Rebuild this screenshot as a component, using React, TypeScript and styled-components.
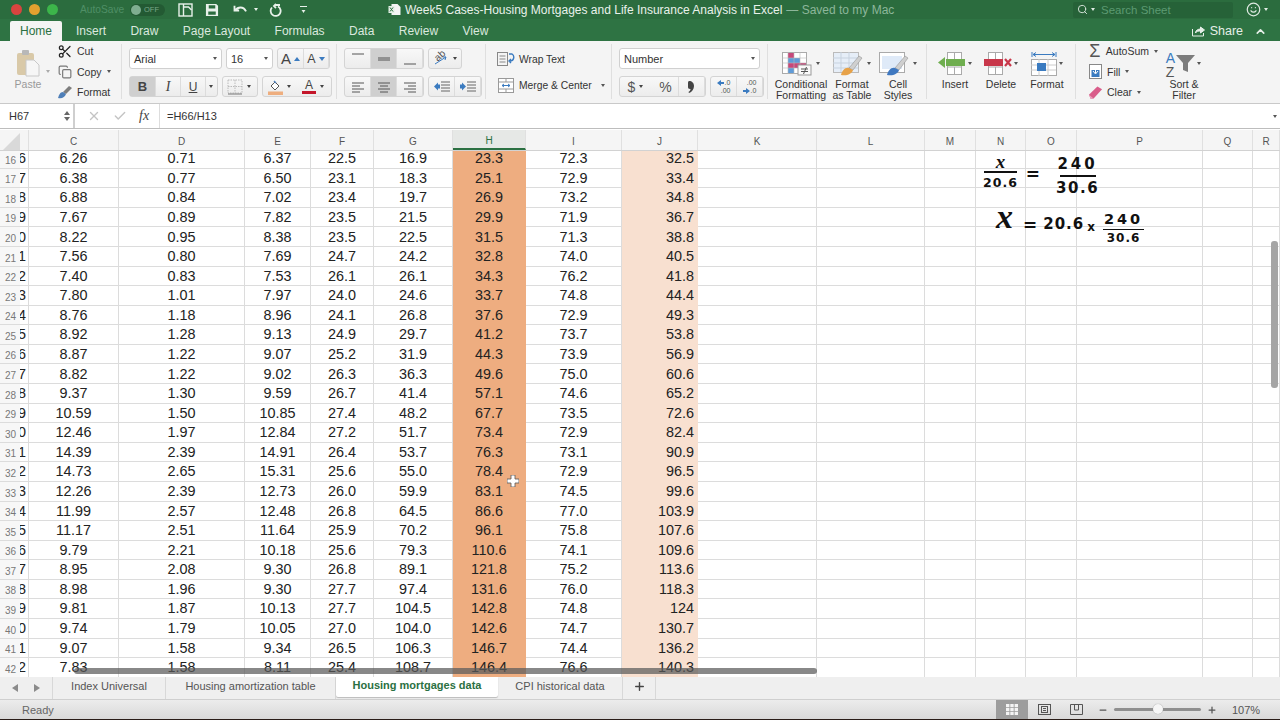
import React from 'react';
import styled, { createGlobalStyle } from 'styled-components';
import { Check, ChevronUp, Copy, Minus, Plus, Scissors, Search, Smile, X } from 'lucide-react';

const UI_FONT = '"Liberation Sans", Arial, sans-serif';

const GlobalStyle = createGlobalStyle`
  html, body {
    margin: 0;
    width: 1280px;
    height: 720px;
    overflow: hidden;
    background: #fff;
    font-family: ${UI_FONT};
  }
`;

const COLUMNS = '20px 9px 90px 126px 66px 63px 79px 73px 96px 76px 119px 108px 51px 50px 51px 126px 50px 27px';

const HEADERS = ['C', 'D', 'E', 'F', 'G', 'H', 'I', 'J', 'K', 'L', 'M', 'N', 'O', 'P', 'Q', 'R'];

const ROWS: string[][] = [
  ['6.26', '0.71', '6.37', '22.5', '16.9', '23.3', '72.3', '32.5'],
  ['6.38', '0.77', '6.50', '23.1', '18.3', '25.1', '72.9', '33.4'],
  ['6.88', '0.84', '7.02', '23.4', '19.7', '26.9', '73.2', '34.8'],
  ['7.67', '0.89', '7.82', '23.5', '21.5', '29.9', '71.9', '36.7'],
  ['8.22', '0.95', '8.38', '23.5', '22.5', '31.5', '71.3', '38.8'],
  ['7.56', '0.80', '7.69', '24.7', '24.2', '32.8', '74.0', '40.5'],
  ['7.40', '0.83', '7.53', '26.1', '26.1', '34.3', '76.2', '41.8'],
  ['7.80', '1.01', '7.97', '24.0', '24.6', '33.7', '74.8', '44.4'],
  ['8.76', '1.18', '8.96', '24.1', '26.8', '37.6', '72.9', '49.3'],
  ['8.92', '1.28', '9.13', '24.9', '29.7', '41.2', '73.7', '53.8'],
  ['8.87', '1.22', '9.07', '25.2', '31.9', '44.3', '73.9', '56.9'],
  ['8.82', '1.22', '9.02', '26.3', '36.3', '49.6', '75.0', '60.6'],
  ['9.37', '1.30', '9.59', '26.7', '41.4', '57.1', '74.6', '65.2'],
  ['10.59', '1.50', '10.85', '27.4', '48.2', '67.7', '73.5', '72.6'],
  ['12.46', '1.97', '12.84', '27.2', '51.7', '73.4', '72.9', '82.4'],
  ['14.39', '2.39', '14.91', '26.4', '53.7', '76.3', '73.1', '90.9'],
  ['14.73', '2.65', '15.31', '25.6', '55.0', '78.4', '72.9', '96.5'],
  ['12.26', '2.39', '12.73', '26.0', '59.9', '83.1', '74.5', '99.6'],
  ['11.99', '2.57', '12.48', '26.8', '64.5', '86.6', '77.0', '103.9'],
  ['11.17', '2.51', '11.64', '25.9', '70.2', '96.1', '75.8', '107.6'],
  ['9.79', '2.21', '10.18', '25.6', '79.3', '110.6', '74.1', '109.6'],
  ['8.95', '2.08', '9.30', '26.8', '89.1', '121.8', '75.2', '113.6'],
  ['8.98', '1.96', '9.30', '27.7', '97.4', '131.6', '76.0', '118.3'],
  ['9.81', '1.87', '10.13', '27.7', '104.5', '142.8', '74.8', '124'],
  ['9.74', '1.79', '10.05', '27.0', '104.0', '142.6', '74.7', '130.7'],
  ['9.07', '1.58', '9.34', '26.5', '106.3', '146.7', '74.4', '136.2'],
  ['7.83', '1.58', '8.11', '25.4', '108.7', '146.4', '76.6', '140.3'],
];

const TABS = ['Insert', 'Draw', 'Page Layout', 'Formulas', 'Data', 'Review', 'View'];

const App: React.FC = () => (
  <Page>
    <GlobalStyle />
    <TitleBar>
      <Lights>
        <Light $color="#d8443f" />
        <Light $color="#e3a12f" />
        <Light $color="#3cb54a" />
      </Lights>
      <AutoSave>AutoSave</AutoSave>
      <Toggle>
        <Knob />
        OFF
      </Toggle>
      <QuickIcons>
        <QuickIcon $left={0}>
          <svg width="15" height="14" viewBox="0 0 15 14" fill="none" stroke="#e8f1ea" strokeWidth="1.4">
            <rect x="1" y="1" width="13" height="12" />
            <path d="M5.5 1v12M5.5 4h5l3 3" />
          </svg>
        </QuickIcon>
        <QuickIcon $left={12}>
          <svg width="14" height="14" viewBox="0 0 15 15" fill="#e8f1ea">
            <path d="M1 1h11l2 2v11H1zM4 2.5V6h7V2.5zM3.5 9v3.5h8V9z" fillRule="evenodd" />
          </svg>
        </QuickIcon>
        <QuickIcon $left={14}>
          <svg width="15" height="12" viewBox="0 0 16 13" fill="none" stroke="#e8f1ea" strokeWidth="2">
            <path d="M1.5 2v5h5M2 7c3-4 9-5 12 1" />
          </svg>
        </QuickIcon>
        <QuickIcon $left={5}><SmallCaret $color="#e8f1ea" /></QuickIcon>
        <QuickIcon $left={10}>
          <svg width="13" height="14" viewBox="0 0 13 14" fill="none" stroke="#e8f1ea" strokeWidth="1.8">
            <path d="M6 2h5M7 1 5 3l2 2M9 3.5a5 5 0 1 1-6 1" />
          </svg>
        </QuickIcon>
        <QuickIcon $left={18}><CustomizeMark /></QuickIcon>
      </QuickIcons>
      <DocTitle>
        <svg width="13" height="13" viewBox="0 0 12 13">
          <path d="M3 1h6l3 3v8H3z" fill="#f4f4f4" />
          <rect x="0" y="3" width="6" height="7" fill="#e4efe6" />
          <path d="M1.5 4.5l3 4M4.5 4.5l-3 4" stroke="#2b6e40" strokeWidth="1" />
        </svg>
        <TitleText>Week5 Cases-Housing Mortgages and Life Insurance Analysis in Excel</TitleText>
        <SavedText>— Saved to my Mac</SavedText>
      </DocTitle>
      <SearchBox>
        <Search size={11} color="#dfeae2" />
        <SmallCaret $color="#dfeae2" />
        <SearchLabel>Search Sheet</SearchLabel>
      </SearchBox>
      <Smiley>
        <Smile size={15} color="#dfeae2" />
        <SmallCaret $color="#dfeae2" />
      </Smiley>
    </TitleBar>

    <TabBar>
      <HomeTab>Home</HomeTab>
      <TabList>
        {TABS.map((tab) => (
          <RibbonTab key={tab}>{tab}</RibbonTab>
        ))}
      </TabList>
      <ShareBox>
        <svg width="15" height="12" viewBox="0 0 14 12" fill="none" stroke="#e6efe8" strokeWidth="1">
          <path d="M1 4v7h11V8" />
          <path d="M4 8c0-3 3-4 5-4V2l4 3-4 3V6c-2 0-4 0-5 2z" fill="#e6efe8" />
        </svg>
        <span>Share</span>
        <ChevronUp size={13} color="#e6efe8" strokeWidth={3} />
      </ShareBox>
    </TabBar>

    <Ribbon>
      <ClipboardGroup>
        <BigTool $width={34}>
          <IconZone>
            <svg width="24" height="27" viewBox="0 0 24 27">
              <rect x="1" y="3" width="17" height="22" rx="2" fill="#d9c9a8" />
              <rect x="6" y="0" width="7" height="5" rx="1" fill="#b8b8b8" />
              <path d="M10 10h8l5 5v11H10z" fill="#f6f6f6" stroke="#c8c8c8" />
            </svg>
          </IconZone>
          <MutedLabel>Paste</MutedLabel>
        </BigTool>
        <SmallCaret $color="#aaa" />
        <ClipList>
          <ClipRow>
            <Scissors size={15} color="#222" />
            Cut
          </ClipRow>
          <ClipRow>
            <Copy size={14} color="#777" />
            Copy
            <SmallCaret $color="#555" />
          </ClipRow>
          <ClipRow>
            <svg width="16" height="14" viewBox="0 0 16 14">
              <path d="M6 7l6-6 3 2-6 6z" fill="#7d7d7d" />
              <path d="M1 13c1-3 2-6 5-6l3 2c-1 3-4 5-8 4z" fill="#4f7fb8" />
            </svg>
            Format
          </ClipRow>
        </ClipList>
      </ClipboardGroup>
      <Divider />

      <ToolStack $width={214} $left={7}>
        <ToolRow>
          <Combo $width={93}>
            <ComboText>Arial</ComboText>
            <ComboCaret />
          </Combo>
          <Combo $width={47}>
            <ComboText>16</ComboText>
            <ComboCaret />
          </Combo>
          <BtnGroup>
            <Seg $width={26}>
              <GrowA>A</GrowA>
              <Tri $up />
            </Seg>
            <Seg $width={25}>
              <ShrinkA>A</ShrinkA>
              <Tri />
            </Seg>
          </BtnGroup>
        </ToolRow>
        <ToolRow>
          <BtnGroup>
            <Seg $width={26} $active><BoldMark>B</BoldMark></Seg>
            <Seg $width={25}><ItalicMark>I</ItalicMark></Seg>
            <Seg $width={25}><UnderMark>U</UnderMark></Seg>
            <Seg $width={11} $plain><SmallCaret $color="#444" /></Seg>
          </BtnGroup>
          <BtnGroup>
            <Seg $width={34} $plain>
              <svg width="16" height="16" viewBox="0 0 16 16" fill="none" stroke="#bbb" strokeDasharray="1.5 1">
                <rect x="1" y="1" width="14" height="13" />
                <path d="M8 1v13M1 7.5h14" />
                <path d="M1 15h14" stroke="#777" strokeDasharray="none" />
              </svg>
              <SmallCaret $color="#444" />
            </Seg>
          </BtnGroup>
          <BtnGroup>
            <Seg $width={34} $plain>
              <svg width="15" height="16" viewBox="0 0 15 16" fill="none">
                <path d="M3 7l4-4 4 4-4 4z" stroke="#555" fill="#fff" />
                <path d="M6 2l2 2" stroke="#4f7fb8" strokeWidth="1.5" />
                <rect x="0" y="12.5" width="15" height="3.5" fill="#eeae7f" />
              </svg>
              <SmallCaret $color="#444" />
            </Seg>
            <Seg $width={34} $plain>
              <ColorA>A</ColorA>
              <SmallCaret $color="#444" />
            </Seg>
          </BtnGroup>
        </ToolRow>
      </ToolStack>
      <Divider />

      <ToolStack $width={148} $left={7}>
        <ToolRow>
          <BtnGroup>
            <Seg $width={26}><AlignLines d="M3 3h12" /></Seg>
            <Seg $width={26} $active><AlignLines d="M3 7h12M3 9h12" /></Seg>
            <Seg $width={26}><AlignLines d="M3 13h12" /></Seg>
          </BtnGroup>
          <BtnGroup>
            <Seg $width={32} $plain>
              <OrientMark>
                <OrientText>ab</OrientText>
                <svg width="17" height="15" viewBox="0 0 17 15" fill="none" stroke="#3b7bc0">
                  <path d="M3 13 14 6M14 6h-3M14 6l-1 3" />
                </svg>
              </OrientMark>
              <SmallCaret $color="#444" />
            </Seg>
          </BtnGroup>
        </ToolRow>
        <ToolRow>
          <BtnGroup>
            <Seg $width={26}><AlignLines d="M3 4h12M3 7h8M3 10h12M3 13h8" /></Seg>
            <Seg $width={26} $active><AlignLines d="M3 4h12M5 7h8M3 10h12M5 13h8" /></Seg>
            <Seg $width={26}><AlignLines d="M3 4h12M7 7h8M3 10h12M7 13h8" /></Seg>
          </BtnGroup>
          <BtnGroup>
            <Seg $width={26}><IndentMark /></Seg>
            <Seg $width={26}><IndentMark $flip /></Seg>
          </BtnGroup>
        </ToolRow>
      </ToolStack>
      <Divider />

      <WrapGroup>
        <WrapRow>
          <svg width="18" height="14" viewBox="0 0 18 14" fill="none">
            <rect x="0.5" y="0.5" width="10" height="13" stroke="#888" />
            <path d="M2.5 4h6M2.5 7h6M2.5 10h6" stroke="#888" />
            <path d="M12 2h3c3 2 2 7-2 7M14 7l-2 2 2 2" stroke="#3b7bc0" strokeWidth="1.4" />
          </svg>
          Wrap Text
        </WrapRow>
        <WrapRow>
          <svg width="18" height="15" viewBox="0 0 16 15" fill="none">
            <rect x="0.5" y="0.5" width="15" height="14" stroke="#999" fill="#fff" />
            <path d="M0 4h16M0 11h16M8 0v4M8 11v4" stroke="#999" />
            <path d="M4 7.5h8M4 7.5l2-1.5M4 7.5l2 1.5M12 7.5l-2-1.5M12 7.5l-2 1.5" stroke="#3b7bc0" />
          </svg>
          Merge &amp; Center
          <SmallCaret $color="#555" />
        </WrapRow>
      </WrapGroup>
      <Divider />

      <ToolStack $width={155} $left={7}>
        <ToolRow>
          <Combo $width={141}>
            <ComboText>Number</ComboText>
            <ComboCaret />
          </Combo>
        </ToolRow>
        <ToolRow>
          <BtnGroup>
            <Seg $width={33} $plain>
              <SymbolMark>$</SymbolMark>
              <SmallCaret $color="#444" />
            </Seg>
            <Seg $width={26}><SymbolMark>%</SymbolMark></Seg>
            <Seg $width={26}>
              <svg width="7" height="12" viewBox="0 0 7 12" fill="#444">
                <path d="M1 0c3 0 5 2 5 5s-2 6-5 7l-.5-1c1.500-1 2-2 2-3H2C.5 8 0 7 0 6V2c0-1 .3-2 1-2z" />
              </svg>
            </Seg>
          </BtnGroup>
          <BtnGroup>
            <Seg $width={26}>
              <DecimalIcon>
                <DecimalLine><BlueArrow />.0</DecimalLine>
                <DecimalLine>.00</DecimalLine>
              </DecimalIcon>
            </Seg>
            <Seg $width={26}>
              <DecimalIcon>
                <DecimalLine>.00</DecimalLine>
                <DecimalLine><BlueArrow $flip />.0</DecimalLine>
              </DecimalIcon>
            </Seg>
          </BtnGroup>
        </ToolRow>
      </ToolStack>
      <Divider />

      <ToolSet $width={158} $left={8}>
        <BigTool $width={50}>
          <IconZone>
            <svg width="32" height="24" viewBox="0 0 32 24">
              <rect x="0.5" y="0.5" width="24" height="21" fill="#fff" stroke="#aaa" />
              <rect x="6" y="1" width="6" height="5" fill="#c6487a" />
              <rect x="6" y="6" width="12" height="5" fill="#5f9bd8" />
              <rect x="6" y="11" width="18" height="5" fill="#c6487a" />
              <rect x="6" y="16" width="6" height="5" fill="#5f9bd8" />
              <path d="M6 0v22M12 0v22M18 0v22M0 6h25M0 11h25M0 16h25" stroke="#bbb" strokeWidth="0.6" />
              <rect x="16" y="13" width="13" height="10" fill="#fafafa" stroke="#999" />
              <path d="M19 17h7M19 19.5h7M24.5 15l-3 7" stroke="#555" />
            </svg>
            <SmallCaret $color="#555" />
          </IconZone>
          <ToolLabel>Conditional<br />Formatting</ToolLabel>
        </BigTool>
        <BigTool $width={44} $left={4}>
          <IconZone>
            <svg width="32" height="24" viewBox="0 0 32 24">
              <rect x="0.5" y="0.5" width="25" height="20" fill="#e6eef8" stroke="#bbb" />
              <path d="M0 6h25M0 11h25M0 16h25M8 0v20M16 0v20" stroke="#c7d2df" />
              <path d="M16 16l10-12 3 2-9 12z" fill="#cfcfcf" stroke="#888" strokeWidth="0.5" />
              <path d="M8 23c1-4 4-8 8-7l4 2c-1 4-6 6-12 5z" fill="#e7a248" />
            </svg>
            <SmallCaret $color="#555" />
          </IconZone>
          <ToolLabel>Format<br />as Table</ToolLabel>
        </BigTool>
        <BigTool $width={40} $left={4}>
          <IconZone>
            <svg width="32" height="24" viewBox="0 0 32 24">
              <rect x="0.5" y="0.5" width="25" height="20" fill="#fff" stroke="#aaa" />
              <rect x="3" y="4" width="20" height="13" fill="#dfeaf8" />
              <path d="M16 16l10-12 3 2-9 12z" fill="#cfcfcf" stroke="#888" strokeWidth="0.5" />
              <path d="M8 23c1-4 4-8 8-7l4 2c-1 4-6 6-12 5z" fill="#3f78c0" />
            </svg>
            <SmallCaret $color="#555" />
          </IconZone>
          <ToolLabel>Cell<br />Styles</ToolLabel>
        </BigTool>
      </ToolSet>
      <Divider />

      <ToolSet $width={148} $left={5}>
        <BigTool $width={46}>
          <IconZone>
            <svg width="28" height="23" viewBox="0 0 28 23">
              <rect x="9.5" y="0.5" width="14" height="22" fill="#fff" stroke="#aaa" />
              <path d="M9 15h15M16.5 0v8M16.5 15v8" stroke="#aaa" />
              <rect x="8" y="7" width="19" height="7" fill="#6fae4f" />
              <path d="M0 10.5 7 5v11z" fill="#6fae4f" />
            </svg>
            <SmallCaret $color="#555" />
          </IconZone>
          <ToolLabel>Insert</ToolLabel>
        </BigTool>
        <BigTool $width={46}>
          <IconZone>
            <svg width="28" height="23" viewBox="0 0 28 23">
              <rect x="4.5" y="0.5" width="14" height="22" fill="#fff" stroke="#aaa" />
              <path d="M4 15h15M11.5 0v8M11.5 15v8" stroke="#aaa" />
              <rect x="0" y="7" width="19" height="7" fill="#c8374a" />
              <path d="M21 7l6 7M27 7l-6 7" stroke="#c8374a" strokeWidth="2.2" />
            </svg>
            <SmallCaret $color="#555" />
          </IconZone>
          <ToolLabel>Delete</ToolLabel>
        </BigTool>
        <BigTool $width={46}>
          <IconZone>
            <svg width="26" height="24" viewBox="0 0 26 24" fill="none">
              <path d="M1 0v5M25 0v5M2 2.5h22M2 2.5l3-2M2 2.5l3 2M24 2.5l-3-2M24 2.5l-3 2" stroke="#3b7bc0" />
              <rect x="0.5" y="7.5" width="25" height="16" fill="#fff" stroke="#aaa" />
              <path d="M0 13h25M0 18h25M8 7v17M17 7v17" stroke="#ccc" />
              <rect x="6" y="11" width="9" height="8" fill="#3b7bc0" />
            </svg>
            <SmallCaret $color="#555" />
          </IconZone>
          <ToolLabel>Format</ToolLabel>
        </BigTool>
      </ToolSet>
      <Divider />

      <ToolSet $width={200} $left={12}>
        <EditList>
          <EditRow>
            <SigmaMark>Σ</SigmaMark>
            AutoSum
            <SmallCaret $color="#555" />
          </EditRow>
          <EditRow>
            <svg width="14" height="15" viewBox="0 0 14 15">
              <rect x="1" y="0.5" width="12" height="14" fill="#fff" stroke="#888" />
              <rect x="3" y="6" width="8" height="7" fill="#3b7bc0" />
              <path d="M7 3v6M4.5 7 7 10l2.5-3" stroke="#fff" fill="none" />
            </svg>
            Fill
            <SmallCaret $color="#555" />
          </EditRow>
          <EditRow>
            <svg width="16" height="15" viewBox="0 0 16 15">
              <path d="M1 10 10 1l5 3-9 10-3 .5z" fill="#d95d8a" />
              <path d="M1 10l5 4-3 .5z" fill="#e9a3bd" />
            </svg>
            Clear
            <SmallCaret $color="#555" />
          </EditRow>
        </EditList>
        <BigTool $width={50}>
          <IconZone>
            <SortLetters>
              <SortA>A</SortA>
              <SortZ>Z</SortZ>
            </SortLetters>
            <svg width="19" height="17" viewBox="0 0 19 17">
              <path d="M0 0h19l-7 8v9l-5-2V8z" fill="#7c7c7c" />
            </svg>
            <SmallCaret $color="#555" />
          </IconZone>
          <ToolLabel>Sort &amp;<br />Filter</ToolLabel>
        </BigTool>
      </ToolSet>
    </Ribbon>

    <FormulaBar>
      <NameBox>
        H67
        <Stepper>
          <Tri $up $gray />
          <Tri $gray />
        </Stepper>
      </NameBox>
      <FormulaActions>
        <X size={14} color="#c4c4c4" strokeWidth={2.4} />
        <Check size={14} color="#c4c4c4" strokeWidth={2.4} />
        <FxMark>fx</FxMark>
      </FormulaActions>
      <FormulaText>=H66/H13</FormulaText>
      <FormulaCaret />
    </FormulaBar>

    <ColumnHeader>
      <Corner />
      <HeaderCell />
      {HEADERS.map((name) => (
        <HeaderCell key={name} $active={name === 'H'}>{name}</HeaderCell>
      ))}
    </ColumnHeader>

    <Sheet>
      {ROWS.map((row, index) => {
        const num = index + 16;
        return (
          <Row key={num} $first={index === 0}>
            <RowNumber>{num}</RowNumber>
            <Cell $align="right" $clip>{num % 10}</Cell>
            {row.map((value, col) => (
              <Cell
                key={col}
                $align={col === 7 ? 'right' : 'center'}
                $fill={col === 5 ? '#eead80' : col === 7 ? '#f8e0d0' : undefined}
              >
                {value}
              </Cell>
            ))}
            {HEADERS.slice(8).map((name) => (
              <Cell key={name} $align="center" />
            ))}
          </Row>
        );
      })}

      <Ink $left={983} $top={2}>
        <InkFraction>
          <InkLetter>x</InkLetter>
          <InkRule $width={33} $above={1} $below={2} />
          <InkDigits $size={12.5} $spacing={1}>20.6</InkDigits>
        </InkFraction>
        <InkEquals $left={8} $top={11}>=</InkEquals>
        <InkFraction $left={16} $top={4}>
          <InkDigits $size={15} $spacing={3}>240</InkDigits>
          <InkRule $width={36} $above={3} $below={4} />
          <InkDigits $size={15} $spacing={1.5}>30.6</InkDigits>
        </InkFraction>
      </Ink>
      <Ink $left={996} $top={51}>
        <InkBigLetter>x</InkBigLetter>
        <InkEquals $left={10} $top={13}>=</InkEquals>
        <InkDigits $size={15} $spacing={1} $left={6} $top={14.5}>20.6</InkDigits>
        <InkTimes>x</InkTimes>
        <InkFraction $left={8} $top={9.5}>
          <InkDigits $size={14.5} $spacing={3}>240</InkDigits>
          <InkRule $width={41} $above={2} $below={1} />
          <InkDigits $size={12} $spacing={1}>30.6</InkDigits>
        </InkFraction>
      </Ink>

      <CrossCursor>
        <svg width="12" height="12" viewBox="0 0 12 12">
          <path d="M4 0h4v4h4v4H8v4H4V8H0V4h4z" fill="#fff" stroke="#555" strokeWidth="0.8" />
        </svg>
      </CrossCursor>
      <HScrollThumb />
      <VScrollThumb />
    </Sheet>

    <SheetTabs>
      <TabArrows>
        <ArrowLeft />
        <ArrowRight />
      </TabArrows>
      <SheetTab $width={113}>Index Universal</SheetTab>
      <SheetTab $width={170}>Housing amortization table</SheetTab>
      <ActiveSheetTab>Housing mortgages data</ActiveSheetTab>
      <SheetTab $width={125}>CPI historical data</SheetTab>
      <AddSheet><Plus size={13} color="#444" strokeWidth={2.6} /></AddSheet>
    </SheetTabs>

    <StatusBar>
      <Ready>Ready</Ready>
      <ViewButtons>
        <ViewButton $active>
          <svg width="12" height="11" viewBox="0 0 12 11" fill="#f4f4f4">
            <path d="M0 0h3.4v3.2H0zM4.3 0h3.4v3.2H4.3zM8.6 0H12v3.2H8.6zM0 4h3.4v3.2H0zM4.3 4h3.4v3.2H4.3zM8.6 4H12v3.2H8.6zM0 8h3.4v3H0zM4.3 8h3.4v3H4.3zM8.6 8H12v3H8.6z" />
          </svg>
        </ViewButton>
        <ViewButton>
          <svg width="13" height="11" viewBox="0 0 13 11" fill="none" stroke="#555">
            <rect x="0.5" y="0.5" width="12" height="10" />
            <rect x="3.5" y="2.5" width="6" height="6" />
            <path d="M5 4.5h3M5 6.5h3" />
          </svg>
        </ViewButton>
        <ViewButton>
          <svg width="13" height="11" viewBox="0 0 13 11" fill="none" stroke="#555">
            <path d="M0.5 7V0.5h12V7M0.5 10.5h12M0.5 7v3.5M12.5 7v3.5M4.5 0.5V6h4V0.5" />
          </svg>
        </ViewButton>
      </ViewButtons>
      <ZoomBox>
        <Minus size={10} color="#555" strokeWidth={3} />
        <ZoomTrack>
          <ZoomKnob />
        </ZoomTrack>
        <Plus size={10} color="#555" strokeWidth={3} />
      </ZoomBox>
      <ZoomValue>107%</ZoomValue>
    </StatusBar>
    <DesktopEdge />
  </Page>
);

const AlignLines: React.FC<{ d: string }> = ({ d }) => (
  <svg width="18" height="16" viewBox="0 0 18 16" fill="none" stroke="#555">
    <path d={d} />
  </svg>
);

const IndentMark: React.FC<{ $flip?: boolean }> = ({ $flip }) => (
  <svg width="16" height="11" viewBox="0 0 16 11" fill="none">
    <path d="M7 1h9M7 4h9M7 7h9M7 10h9" stroke="#666" />
    <path d={$flip ? 'M0 3.5h2V1.5l4 4-4 4v-2H0z' : 'M6 3.5H4V1.5l-4 4 4 4v-2h2z'} fill="#3b7bc0" />
  </svg>
);

const BlueArrow: React.FC<{ $flip?: boolean }> = ({ $flip }) => (
  <svg width="7" height="6" viewBox="0 0 7 6" fill="#3b7bc0">
    <path d={$flip ? 'M0 2h3V0l4 3-4 3V4H0z' : 'M7 2H4V0L0 3l4 3V4h3z'} />
  </svg>
);

const Page = styled.div`
  display: flex;
  flex-direction: column;
  width: 1280px;
  height: 720px;
  overflow: hidden;
  color: #222;
`;

const TitleBar = styled.div`
  display: flex;
  align-items: center;
  height: 19px;
  background: #2b6c3e;
  flex: none;
`;

const Lights = styled.div`
  display: flex;
  gap: 7px;
  margin-left: 11px;
`;

const Light = styled.span<{ $color: string }>`
  width: 11px;
  height: 11px;
  border-radius: 50%;
  background: ${(p) => p.$color};
`;

const AutoSave = styled.span`
  width: 44px;
  margin-left: 22px;
  font-size: 10.2px;
  color: #4f8f66;
`;

const Toggle = styled.div`
  display: flex;
  align-items: center;
  gap: 3px;
  width: 35px;
  height: 12px;
  margin-left: 6px;
  padding-left: 1px;
  box-sizing: border-box;
  border-radius: 6px;
  background: #235a33;
  color: #79a98a;
  font-size: 7.5px;
`;

const Knob = styled.span`
  width: 10px;
  height: 10px;
  border-radius: 50%;
  background: #7fae90;
`;

const QuickIcons = styled.div`
  display: flex;
  align-items: center;
  width: 210px;
  margin-left: 13px;
  flex: none;
`;

const QuickIcon = styled.span<{ $left: number }>`
  display: flex;
  align-items: center;
  margin-left: ${(p) => p.$left}px;
`;

const SmallCaret = styled.span<{ $color: string }>`
  display: inline-block;
  flex: none;
  width: 0;
  height: 0;
  margin: 0 1px;
  border-left: 2.5px solid transparent;
  border-right: 2.5px solid transparent;
  border-top: 3px solid ${(p) => p.$color};
`;

const CustomizeMark = styled.span`
  width: 7px;
  height: 6px;
  border-top: 1px solid #e8f1ea;
  background: linear-gradient(#e8f1ea, #e8f1ea) center 3px / 7px 3px no-repeat;
  clip-path: polygon(0 0, 100% 0, 100% 20%, 50% 100%, 0 20%);
`;

const DocTitle = styled.div`
  display: flex;
  align-items: center;
  gap: 4px;
  flex: none;
  width: 685px;
  font-size: 12px;
`;

const TitleText = styled.span`
  color: #e9f1eb;
`;

const SavedText = styled.span`
  color: #8db69a;
`;

const SearchBox = styled.div`
  display: flex;
  align-items: center;
  gap: 2px;
  width: 160px;
  height: 16px;
  padding-left: 4px;
  box-sizing: border-box;
  border-radius: 2px;
  background: #266238;
`;

const SearchLabel = styled.span`
  margin-left: 3px;
  font-size: 11.5px;
  color: #5c9a72;
`;

const Smiley = styled.div`
  display: flex;
  align-items: center;
  gap: 2px;
  margin-left: 13px;
`;

const TabBar = styled.div`
  display: flex;
  align-items: flex-end;
  height: 22px;
  flex: none;
  background: #2e7343;
`;

const HomeTab = styled.div`
  width: 52px;
  height: 20px;
  margin-left: 10px;
  border-radius: 2px 2px 0 0;
  background: #f4f4f4;
  color: #2b7042;
  font-size: 12px;
  line-height: 20px;
  text-align: center;
`;

const TabList = styled.div`
  display: flex;
  gap: 24.4px;
  margin-left: 14px;
  height: 20px;
  flex: none;
`;

const RibbonTab = styled.span`
  color: #dbe8df;
  font-size: 12px;
  line-height: 20px;
`;

const ShareBox = styled.div`
  display: flex;
  align-items: center;
  gap: 4px;
  height: 20px;
  margin-left: auto;
  margin-right: 13px;
  color: #e6efe8;
  font-size: 12.5px;
  span {
    margin-right: 7px;
  }
`;

const Ribbon = styled.div`
  display: flex;
  height: 62px;
  flex: none;
  background: #f4f4f4;
  border-bottom: 1px solid #c9c9c9;
`;

const Divider = styled.div`
  width: 1px;
  flex: none;
  margin: 3px 0 4px;
  background: #dfdfdf;
`;

const ClipboardGroup = styled.div`
  display: flex;
  align-items: flex-start;
  width: 121px;
  padding-left: 11px;
  box-sizing: border-box;

  & > span {
    margin-top: 29px;
  }
`;

const BigTool = styled.div<{ $width: number; $left?: number }>`
  display: flex;
  flex-direction: column;
  align-items: center;
  flex: none;
  width: ${(p) => p.$width}px;
  margin-left: ${(p) => p.$left ?? 0}px;
  padding-top: 7px;
`;

const IconZone = styled.div`
  display: flex;
  align-items: center;
  justify-content: center;
  gap: 1px;
  height: 31px;
  white-space: nowrap;
`;

const ToolLabel = styled.div`
  font-size: 10.5px;
  line-height: 11px;
  color: #333;
  text-align: center;
  white-space: nowrap;
`;

const MutedLabel = styled(ToolLabel)`
  color: #999;
`;

const ClipList = styled.div`
  display: flex;
  flex-direction: column;
  margin-left: 6px;
`;

const EditList = styled(ClipList)`
  flex: none;
  width: 71px;
  margin-left: 0;
`;

const ClipRow = styled.div`
  display: flex;
  align-items: center;
  height: 20.5px;
  gap: 4px;
  font-size: 10.5px;
  color: #333;

  & > svg {
    width: 16px;
  }
`;

const EditRow = styled(ClipRow)`
  & > :first-child {
    width: 15px;
  }
`;

const SigmaMark = styled.span`
  font-size: 18px;
  line-height: 16px;
  color: #555;
  text-align: center;
`;

const ToolStack = styled.div<{ $width: number; $left: number }>`
  display: flex;
  flex-direction: column;
  flex: none;
  gap: 7px;
  width: ${(p) => p.$width}px;
  padding: 7px 0 0 ${(p) => p.$left}px;
  box-sizing: border-box;
`;

const ToolRow = styled.div`
  display: flex;
  gap: 4px;
  height: 21px;
`;

const ToolSet = styled.div<{ $width: number; $left: number }>`
  display: flex;
  flex: none;
  width: ${(p) => p.$width}px;
  padding-left: ${(p) => p.$left}px;
  box-sizing: border-box;
`;

const Combo = styled.div<{ $width: number }>`
  display: flex;
  align-items: center;
  justify-content: space-between;
  width: ${(p) => p.$width}px;
  box-sizing: border-box;
  padding: 0 4px;
  background: #fff;
  border: 1px solid #d0d0d0;
  border-radius: 3px;
`;

const ComboText = styled.span`
  font-size: 11px;
  color: #333;
`;

const ComboCaret = styled.span`
  width: 0;
  height: 0;
  border-left: 2.5px solid transparent;
  border-right: 2.5px solid transparent;
  border-top: 3px solid #555;
`;

const BtnGroup = styled.div`
  display: flex;
  height: 21px;
  box-sizing: border-box;
  border: 1px solid #d4d4d4;
  border-radius: 3px;
  background: linear-gradient(#f8f8f8, #ececec);
`;

const Seg = styled.div<{ $width: number; $active?: boolean; $plain?: boolean }>`
  display: flex;
  align-items: center;
  justify-content: center;
  gap: 3px;
  width: ${(p) => p.$width}px;
  background: ${(p) => (p.$active ? '#cfcfcf' : 'transparent')};
  border-right: 1px solid ${(p) => (p.$plain ? 'transparent' : '#dcdcdc')};
  box-sizing: border-box;
  color: #444;
`;

const GrowA = styled.span`
  font-size: 15px;
`;

const ShrinkA = styled.span`
  font-size: 12.5px;
`;

const Tri = styled.span<{ $up?: boolean; $gray?: boolean }>`
  width: 0;
  height: 0;
  border-left: 3.5px solid transparent;
  border-right: 3.5px solid transparent;
  ${(p) => (p.$up ? 'border-bottom' : 'border-top')}: 4px solid ${(p) => (p.$gray ? '#666' : '#3b7bc0')};
`;

const BoldMark = styled.span`
  font-weight: bold;
  font-size: 13px;
`;

const ItalicMark = styled.span`
  font-family: "Liberation Serif", serif;
  font-style: italic;
  font-size: 14px;
`;

const UnderMark = styled.span`
  font-size: 12px;
  text-decoration: underline;
`;

const ColorA = styled.span`
  width: 14px;
  border-bottom: 3px solid #c4162a;
  font-size: 12px;
  line-height: 12px;
  text-align: center;
`;

const OrientMark = styled.span`
  position: relative;
  display: flex;
  width: 17px;
  height: 15px;
`;

const OrientText = styled.span`
  position: absolute;
  left: 2px;
  top: -1px;
  transform: rotate(-42deg);
  font-size: 10px;
  color: #555;
`;

const SymbolMark = styled.span`
  font-size: 14px;
  color: #555;
`;

const DecimalIcon = styled.span`
  display: flex;
  flex-direction: column;
  align-items: flex-end;
  font-size: 7px;
  line-height: 8px;
  color: #555;
`;

const DecimalLine = styled.span`
  display: flex;
  align-items: center;
  gap: 1px;
`;

const WrapGroup = styled.div`
  display: flex;
  flex-direction: column;
  flex: none;
  gap: 8px;
  width: 125px;
  padding: 9px 0 0 11px;
  box-sizing: border-box;
`;

const WrapRow = styled.div`
  display: flex;
  align-items: center;
  height: 18px;
  gap: 4px;
  font-size: 10.3px;
  color: #333;
  white-space: nowrap;

  & > span {
    margin-left: 5px;
  }
`;

const SortLetters = styled.div`
  display: flex;
  flex-direction: column;
  margin-top: 2px;
  font-size: 14px;
  line-height: 14px;
`;

const SortA = styled.span`
  color: #3b7bc0;
`;

const SortZ = styled.span`
  color: #555;
`;

const FormulaBar = styled.div`
  display: flex;
  align-items: center;
  height: 25px;
  flex: none;
  background: #fff;
  border-bottom: 1px solid #bdbdbd;
  box-sizing: border-box;
`;

const NameBox = styled.div`
  display: flex;
  align-items: center;
  justify-content: space-between;
  width: 75px;
  height: 100%;
  padding: 0 3px 0 9px;
  box-sizing: border-box;
  border-right: 2px solid #cfcfcf;
  font-size: 11px;
  color: #333;
`;

const Stepper = styled.div`
  display: flex;
  flex-direction: column;
  gap: 2px;
`;

const FormulaActions = styled.div`
  display: flex;
  align-items: center;
  gap: 12px;
  width: 85px;
  height: 100%;
  padding-left: 12px;
  box-sizing: border-box;
  border-right: 1px solid #ddd;
`;

const FxMark = styled.span`
  font-family: "Liberation Serif", serif;
  font-style: italic;
  font-size: 14px;
  color: #444;
`;

const FormulaText = styled.span`
  margin-left: 7px;
  font-size: 11px;
  color: #333;
`;

const FormulaCaret = styled(ComboCaret)`
  margin-left: auto;
  margin-right: 3px;
`;

const ColumnHeader = styled.div`
  display: grid;
  grid-template-columns: ${COLUMNS};
  height: 21px;
  margin-top: 1px;
  flex: none;
  background: #f5f5f5;
  border-bottom: 1px solid #d2d2d2;
  box-sizing: border-box;
`;

const Corner = styled.div`
  background: #d9d9d9;
  clip-path: polygon(100% 15%, 100% 100%, 15% 100%);
`;

const HeaderCell = styled.div<{ $active?: boolean }>`
  display: flex;
  align-items: center;
  justify-content: center;
  padding-top: 2px;
  box-sizing: border-box;
  font-size: 10px;
  color: ${(p) => (p.$active ? '#2b7042' : '#555')};
  background: ${(p) => (p.$active ? '#e6e8e6' : 'transparent')};
  border-right: 1px solid #e0e0e0;
  border-bottom: ${(p) => (p.$active ? '2px solid #2b7042' : 'none')};
`;

const Sheet = styled.div`
  position: relative;
  flex: none;
  height: 525.5px;
  overflow: hidden;
  background: #fff;
`;

const Row = styled.div<{ $first?: boolean }>`
  display: grid;
  grid-template-columns: ${COLUMNS};
  height: ${(p) => (p.$first ? 17.7 : 19.58)}px;
  box-sizing: border-box;
  border-bottom: 1px solid #dcdcdc;
`;

const RowNumber = styled.div`
  display: flex;
  align-items: flex-end;
  justify-content: flex-end;
  padding: 0 4px 2px 0;
  font-size: 10px;
  color: #777;
  background: #f7f7f7;
`;

const Cell = styled.div<{ $align: string; $fill?: string; $clip?: boolean }>`
  display: flex;
  align-items: flex-end;
  justify-content: ${(p) => (p.$align === 'right' ? 'flex-end' : 'center')};
  padding-right: ${(p) => (p.$align === 'right' ? (p.$clip ? 2 : 3) : 0)}px;
  padding-bottom: ${(p) => (p.$fill ? 1 : 0)}px;
  margin-bottom: ${(p) => (p.$fill ? -1 : 0)}px;
  overflow: hidden;
  box-sizing: border-box;
  border-right: 1px solid ${(p) => p.$fill ?? '#dcdcdc'};
  background: ${(p) => p.$fill ?? 'transparent'};
  font-size: 14.4px;
  line-height: 18.5px;
  color: #222;
  white-space: nowrap;
`;

const Ink = styled.div<{ $left: number; $top: number }>`
  position: absolute;
  left: ${(p) => p.$left}px;
  top: ${(p) => p.$top}px;
  display: flex;
  align-items: flex-start;
  color: #111;
  font-family: "DejaVu Sans", sans-serif;
  font-weight: bold;
`;

const InkFraction = styled.div<{ $left?: number; $top?: number }>`
  display: flex;
  flex-direction: column;
  align-items: center;
  margin-left: ${(p) => p.$left ?? 0}px;
  margin-top: ${(p) => p.$top ?? 0}px;
`;

const InkRule = styled.div<{ $width: number; $above: number; $below: number }>`
  width: ${(p) => p.$width}px;
  height: 1.5px;
  margin: ${(p) => p.$above}px 0 ${(p) => p.$below}px;
  background: #111;
`;

const InkLetter = styled.span`
  font-family: "Liberation Serif", serif;
  font-style: italic;
  font-size: 19px;
  line-height: 17px;
`;

const InkBigLetter = styled(InkLetter)`
  font-size: 34px;
  line-height: 30px;
`;

const InkDigits = styled.span<{ $size: number; $spacing: number; $left?: number; $top?: number }>`
  margin-left: ${(p) => p.$left ?? 0}px;
  margin-top: ${(p) => p.$top ?? 0}px;
  font-size: ${(p) => p.$size}px;
  letter-spacing: ${(p) => p.$spacing}px;
  line-height: 15px;
  white-space: nowrap;
`;

const InkEquals = styled.span<{ $left: number; $top: number }>`
  margin-left: ${(p) => p.$left}px;
  margin-top: ${(p) => p.$top}px;
  font-size: 17px;
`;

const InkTimes = styled.span`
  margin: 18px 0 0 3px;
  font-size: 12px;
`;

const CrossCursor = styled.div`
  position: absolute;
  left: 507px;
  top: 324px;
  line-height: 0;
`;

const HScrollThumb = styled.div`
  position: absolute;
  left: 74px;
  top: 517px;
  width: 743px;
  height: 6px;
  border-radius: 3px;
  background: rgba(90, 90, 90, 0.72);
`;

const VScrollThumb = styled.div`
  position: absolute;
  left: 1271px;
  top: 90px;
  width: 7px;
  height: 147px;
  border-radius: 3px;
  background: #a5a5a5;
`;

const SheetTabs = styled.div`
  display: flex;
  align-items: stretch;
  height: 23.5px;
  flex: none;
  background: #efefef;
  border-bottom: 1px solid #cfcfcf;
  box-sizing: border-box;
`;

const TabArrows = styled.div`
  display: flex;
  align-items: center;
  gap: 16px;
  width: 53px;
  padding-left: 12px;
  box-sizing: border-box;
  border-right: 1px solid #d8d8d8;
`;

const ArrowLeft = styled.span`
  border-top: 4.5px solid transparent;
  border-bottom: 4.5px solid transparent;
  border-right: 6px solid #8b8b8b;
`;

const ArrowRight = styled.span`
  border-top: 4.5px solid transparent;
  border-bottom: 4.5px solid transparent;
  border-left: 6px solid #8b8b8b;
`;

const SheetTab = styled.div<{ $width: number }>`
  display: flex;
  align-items: center;
  justify-content: center;
  width: ${(p) => p.$width}px;
  padding-bottom: 4px;
  box-sizing: border-box;
  border-right: 1px solid #d8d8d8;
  font-size: 11px;
  color: #555;
  white-space: nowrap;
`;

const ActiveSheetTab = styled.div`
  display: flex;
  align-items: center;
  justify-content: center;
  width: 162px;
  margin-bottom: 2px;
  padding-bottom: 3px;
  box-sizing: border-box;
  background: #fff;
  border-radius: 0 0 2px 2px;
  box-shadow: 0 1px 1px #bbb;
  font-size: 11px;
  font-weight: bold;
  color: #2b7042;
  white-space: nowrap;
`;

const AddSheet = styled.div`
  display: flex;
  align-items: center;
  justify-content: center;
  width: 33px;
  padding-bottom: 3px;
  box-sizing: border-box;
  border-right: 1px solid #d8d8d8;
`;

const StatusBar = styled.div`
  display: flex;
  align-items: center;
  height: 19px;
  flex: none;
  background: linear-gradient(#ececec, #d9d9d9);
`;

const Ready = styled.span`
  margin-left: 22px;
  font-size: 11px;
  color: #666;
`;

const ViewButtons = styled.div`
  display: flex;
  align-self: stretch;
  margin-left: auto;
`;

const ViewButton = styled.div<{ $active?: boolean }>`
  display: flex;
  align-items: center;
  justify-content: center;
  width: 32px;
  background: ${(p) => (p.$active ? '#9d9d9d' : 'transparent')};
`;

const ZoomBox = styled.div`
  display: flex;
  align-items: center;
  gap: 6px;
  margin-left: 6px;
`;

const ZoomTrack = styled.div`
  position: relative;
  width: 87px;
  height: 3px;
  border-radius: 2px;
  background: #8f8f8f;
`;

const ZoomKnob = styled.span`
  position: absolute;
  left: 39px;
  top: -4px;
  width: 10px;
  height: 10px;
  border-radius: 50%;
  background: #f6f6f6;
  box-shadow: 0 0 1px #888;
`;

const ZoomValue = styled.span`
  width: 26px;
  margin: 0 22px 0 15px;
  font-size: 11px;
  color: #555;
`;

const DesktopEdge = styled.div`
  height: 2px;
  flex: none;
  background: #2a1d18;
`;

export default App;
